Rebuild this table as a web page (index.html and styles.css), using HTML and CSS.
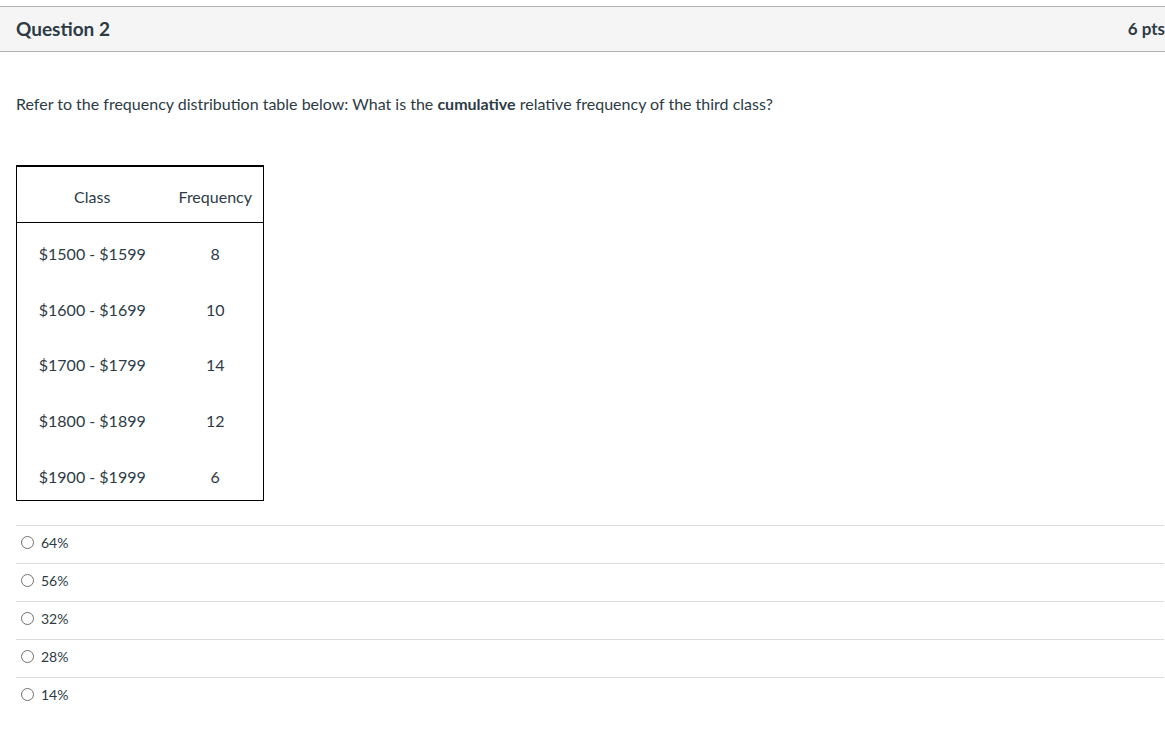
FILE: index.html
```html
<!DOCTYPE html>
<html>
<head>
<meta charset="utf-8">
<link rel="stylesheet" href="styles.css">
</head>
<body>
<div class="question">
  <div class="q-header">
    <span class="q-title">Question 2</span>
    <span class="q-pts">6 pts</span>
  </div>
  <div class="q-body">
    <p class="q-text">Refer to the frequency distribution table below: What is the <strong>cumulative</strong> relative frequency of the third class?</p>
    <table class="freq">
      <thead>
        <tr><th class="c1">Class</th><th class="c2">Frequency</th></tr>
      </thead>
      <tbody>
        <tr><td>$1500 - $1599</td><td>8</td></tr>
        <tr><td>$1600 - $1699</td><td>10</td></tr>
        <tr><td>$1700 - $1799</td><td>14</td></tr>
        <tr><td>$1800 - $1899</td><td>12</td></tr>
        <tr><td>$1900 - $1999</td><td>6</td></tr>
      </tbody>
    </table>
    <div class="answers">
      <label class="answer"><span class="radio"></span><span>64%</span></label>
      <label class="answer"><span class="radio"></span><span>56%</span></label>
      <label class="answer"><span class="radio"></span><span>32%</span></label>
      <label class="answer"><span class="radio"></span><span>28%</span></label>
      <label class="answer"><span class="radio"></span><span>14%</span></label>
    </div>
  </div>
</div>
</body>
</html>
```

FILE: styles.css
```css
html, body {
  margin: 0;
  padding: 0;
  background: #fff;
  overflow: hidden;
}
body {
  font-family: Lato, "Open Sans", sans-serif;
  color: #2d3b45;
}
.question {
  margin-top: 6px;
  width: 1165px;
}
.q-header {
  display: flex;
  justify-content: space-between;
  align-items: center;
  height: 43px;
  padding: 0 0 1px 16px;
  box-sizing: content-box;
  background: #f5f5f5;
  border-top: 1px solid #b0b5b9;
  border-bottom: 1px solid #b0b5b9;
}
.q-title {
  font-size: 19px;
  font-weight: 700;
  color: #2d3b45;
}
.q-pts {
  font-size: 17px;
  font-weight: 700;
  color: #2d3b45;
}
.q-body {
  padding: 0 1px 0 16px;
}
.q-text {
  margin: 42px 0 0 0;
  font-size: 16px;
  line-height: 19px;
}
.q-text strong {
  font-weight: 700;
}
.freq {
  margin-top: 52px;
  border-collapse: collapse;
  border: 1px solid #000;
  border-top-width: 2px;
  font-size: 16px;
  width: 248px;
}
.freq th {
  font-weight: 400;
  height: 56px;
  padding: 5px 0 0 0;
  box-sizing: border-box;
  text-align: center;
  border-bottom: 1px solid #000;
}
.freq .c1 { width: 151px; }
.freq td {
  height: 55.8px;
  padding: 7px 0 0 0;
  box-sizing: border-box;
  text-align: center;
}
.answers {
  margin-top: 24px;
}
.answer {
  display: flex;
  align-items: center;
  gap: 7px;
  height: 33px;
  padding: 0 0 4px 5px;
  border-top: 1px solid #dcdcdc;
  font-size: 14px;
  color: #2d3b45;
}
.radio {
  width: 11px;
  height: 11px;
  border: 1px solid #707070;
  border-radius: 50%;
  flex-shrink: 0;
}
```
